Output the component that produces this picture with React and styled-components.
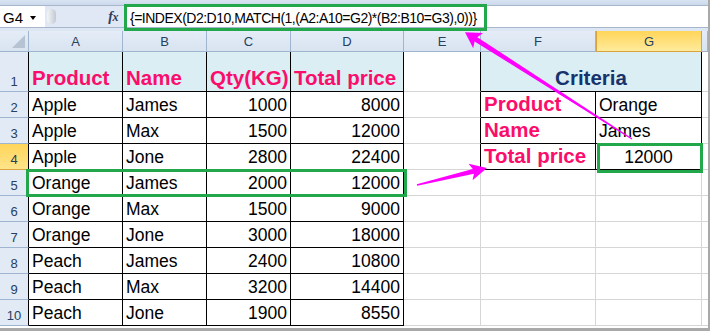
import React from 'react';
import styled, { createGlobalStyle } from 'styled-components';

const PINK = '#fb0d6b';
const NAVY = '#17336b';
const GREEN = '#22a84b';
const GRID = '#d6d6d6';
const HEAD_LINE = '#9fb5cf';

const GlobalStyle = createGlobalStyle`
  body {
    margin: 0;
    background: #fff;
    font-family: "Liberation Sans", Arial, sans-serif;
  }
`;

const rows = [
  ['Apple', 'James', 1000, 8000],
  ['Apple', 'Max', 1500, 12000],
  ['Apple', 'Jone', 2800, 22400],
  ['Orange', 'James', 2000, 12000],
  ['Orange', 'Max', 1500, 9000],
  ['Orange', 'Jone', 3000, 18000],
  ['Peach', 'James', 2400, 10800],
  ['Peach', 'Max', 3200, 14400],
  ['Peach', 'Jone', 1900, 8550],
];

// criteria block sits in F2:G4
const criteria = {
  2: ['Product', 'Orange'],
  3: ['Name', 'James'],
  4: ['Total price', '12000'],
};

const cols = ['A', 'B', 'C', 'D', 'E', 'F', 'G'];

const App = () => {
  return (
    <Frame>
      <GlobalStyle />
      <TopBand />
      <BarRow>
        <NameBox>
          G4
          <Caret />
        </NameBox>
        <Tools>
          <Knob />
          <Fx>
            f<small>x</small>
          </Fx>
        </Tools>
        <FormulaInput>{'{=INDEX(D2:D10,MATCH(1,(A2:A10=G2)*(B2:B10=G3),0))}'}</FormulaInput>
      </BarRow>
      <BottomBand />

      <Sheet>
        <Corner />
        {cols.map((c) => (
          <ColHead key={c} $active={c === 'G'}>
            {c}
          </ColHead>
        ))}
        <ColHead />

        <RowHead>1</RowHead>
        <Cell $head $fill $edge $bottom>Product</Cell>
        <Cell $head $fill $edge $bottom>Name</Cell>
        <Cell $head $fill $edge $bottom>Qty(KG)</Cell>
        <Cell $head $fill $edge $bottom>Total price</Cell>
        <Cell $edge />
        <Cell $head $fill $navy $span={2} $align="center" $edge $bottom>
          Criteria
        </Cell>
        <Cell $open />

        {rows.map((r, i) => {
          const n = i + 2;
          const crit = criteria[n];
          return (
            <React.Fragment key={n}>
              <RowHead $active={n === 4}>{n}</RowHead>
              <Cell $edge $bottom>{r[0]}</Cell>
              <Cell $edge $bottom>{r[1]}</Cell>
              <Cell $edge $bottom $align="right">{r[2]}</Cell>
              <Cell $edge $bottom $align="right">{r[3]}</Cell>
              <Cell $edge={!!crit} />
              {crit ? (
                <>
                  <Cell $head $edge $bottom>{crit[0]}</Cell>
                  <Cell $edge $bottom $align={n === 4 ? 'center' : 'left'}>{crit[1]}</Cell>
                </>
              ) : (
                <>
                  <Cell />
                  <Cell />
                </>
              )}
              <Cell $open />
            </React.Fragment>
          );
        })}
      </Sheet>

      <Mark $x={124} $y={4} $w={363} $h={27} />
      <Mark $x={26} $y={169} $w={381} $h={28} />
      <Mark $x={597} $y={143} $w={106} $h={30} />

      <Arrows viewBox="0 0 710 331">
        <polygon points="465,32.3 473.2,48.3 474.6,41.4 631.7,139.5 632.3,138.5 477.3,37.2 483,33.1" />
        <polygon points="487,168 472.5,180.3 474,173.7 417.2,185.7 416.8,184.3 472.8,168.9 468.5,163.7" />
      </Arrows>
    </Frame>
  );
};

export default App;

const Frame = styled.div`
  position: relative;
  width: 710px;
  height: 331px;
  box-sizing: border-box;
  border-right: 2px solid #a9a9a9;
  border-bottom: 3px solid #a9a9a9;
  display: flex;
  flex-direction: column;
  overflow: hidden;
  background: #fff;
`;

const TopBand = styled.div`
  height: 5px;
  background: linear-gradient(#d9e4f2, #cbd9ec);
  border-bottom: 1px solid #a7b6ca;
`;

const BarRow = styled.div`
  height: 21px;
  display: flex;
  background: #dfe8f4;
`;

const BottomBand = styled.div`
  height: 4px;
  background: #dde7f3;
  border-top: 1px solid #a7b6ca;
  box-sizing: border-box;
`;

const NameBox = styled.div`
  width: 45px;
  box-sizing: border-box;
  background: #fff;
  display: flex;
  align-items: center;
  padding: 2px 0 0 3px;
  font-size: 15px;
  color: #000;
`;

const Caret = styled.span`
  margin-left: 7px;
  width: 0;
  height: 0;
  border-left: 3.5px solid transparent;
  border-right: 3.5px solid transparent;
  border-top: 4px solid #000;
`;

const Tools = styled.div`
  width: 79px;
  display: flex;
  align-items: center;
  justify-content: space-between;
  padding: 0 6px 0 2px;
  box-sizing: border-box;
`;

const Knob = styled.div`
  width: 9px;
  height: 15px;
  border-radius: 5px;
  background: linear-gradient(90deg, #f4f6f9, #c3c9d1);
`;

const Fx = styled.div`
  font-family: "Liberation Serif", "Times New Roman", serif;
  font-style: italic;
  font-weight: bold;
  font-size: 14px;
  color: #2a3d5c;
  letter-spacing: -0.5px;

  small {
    font-size: 12px;
  }
`;

const FormulaInput = styled.div`
  flex: 1;
  background: #fff;
  display: flex;
  align-items: center;
  padding: 2px 0 0 6px;
  font-size: 14px;
  letter-spacing: -0.5px;
  color: #000;
  white-space: nowrap;
`;

const Sheet = styled.div`
  flex: 1;
  display: grid;
  grid-template-columns: 29px 94px 84px 84px 113px 77px 115px 106px 1fr;
  grid-template-rows: 21px 40px repeat(9, 26px) 1fr;
`;

const Corner = styled.div`
  position: relative;
  background: linear-gradient(#e4ecf7, #d9e4f1);
  border-right: 1px solid ${HEAD_LINE};
  border-bottom: 1px solid ${HEAD_LINE};

  &::after {
    content: '';
    position: absolute;
    right: 3px;
    bottom: 3px;
    width: 13px;
    height: 13px;
    background: #b6c3d3;
    clip-path: polygon(100% 0, 100% 100%, 0 100%);
  }
`;

const ColHead = styled.div`
  display: flex;
  align-items: center;
  justify-content: center;
  font-size: 13px;
  color: #26405f;
  box-sizing: border-box;
  background: ${(p) =>
    p.$active ? 'linear-gradient(#ffd55a, #ffeb9c)' : 'linear-gradient(#e4ecf7, #d9e4f1)'};
  border-right: 1px solid ${(p) => (p.$active ? '#dba340' : HEAD_LINE)};
  border-bottom: 1px solid ${(p) => (p.$active ? '#dba340' : HEAD_LINE)};
  border-left: ${(p) => (p.$active ? '1px solid #dba340' : 'none')};
`;

const RowHead = styled.div`
  display: flex;
  align-items: flex-end;
  justify-content: center;
  padding-bottom: 2px;
  box-sizing: border-box;
  font-size: 13px;
  color: #26405f;
  background: ${(p) => (p.$active ? 'linear-gradient(#ffd55a, #ffe48a)' : '#e1eaf5')};
  border-bottom: 1px solid ${(p) => (p.$active ? '#dba340' : HEAD_LINE)};
  border-right: 1px solid #000;
`;

const Cell = styled.div`
  grid-column: span ${(p) => p.$span || 1};
  display: flex;
  align-items: flex-end;
  justify-content: ${(p) =>
    p.$align === 'right' ? 'flex-end' : p.$align === 'center' ? 'center' : 'flex-start'};
  padding: 0 3px 1px 3px;
  box-sizing: border-box;
  min-width: 0;
  white-space: nowrap;
  background: ${(p) => (p.$fill ? '#daeef3' : '#fff')};
  border-right: ${(p) => (p.$open ? 'none' : `1px solid ${p.$edge ? '#000' : GRID}`)};
  border-bottom: 1px solid ${(p) => (p.$bottom ? '#000' : GRID)};
  font-size: ${(p) => (p.$head ? '20.5px' : '17.5px')};
  font-weight: ${(p) => (p.$head ? 'bold' : 'normal')};
  color: ${(p) => (p.$navy ? NAVY : p.$head ? PINK : '#000')};
`;

const Mark = styled.div`
  position: absolute;
  left: ${(p) => p.$x}px;
  top: ${(p) => p.$y}px;
  width: ${(p) => p.$w}px;
  height: ${(p) => p.$h}px;
  box-sizing: border-box;
  border: 3px solid ${GREEN};
  pointer-events: none;
`;

const Arrows = styled.svg`
  position: absolute;
  left: 0;
  top: 0;
  width: 710px;
  height: 331px;
  pointer-events: none;

  polygon {
    fill: #ff00ff;
  }
`;
